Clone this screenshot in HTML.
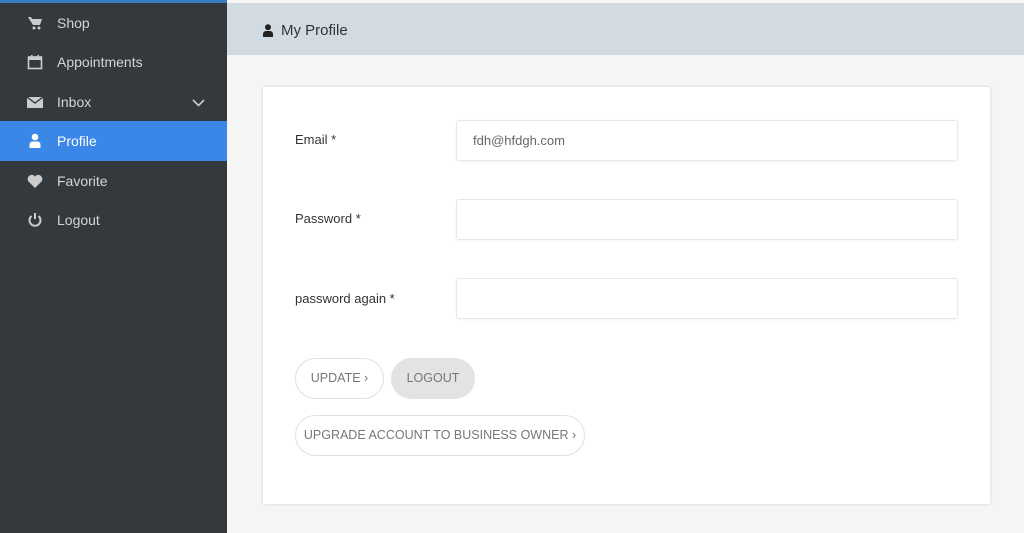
<!DOCTYPE html><html><head><style>
body{margin:0;width:1024px;height:533px;overflow:hidden;font-family:"Liberation Sans",sans-serif;background:#f5f5f5;position:relative}
.sb{position:absolute;left:0;top:0;width:227px;height:533px;background:#33393c}
.sb .top{height:3px;background:#3a7cc0}
.it{position:absolute;left:0;width:227px;height:40px;color:#d4d4d4;font-size:14px;line-height:40px}
.it span{position:absolute;left:57px}
.it svg{position:absolute;left:27px;top:12px}
.act{background:#3a87e8;color:#fff}
.hd{position:absolute;left:227px;top:3px;right:0;height:52px;background:#d3dbe2;color:#333;font-size:15px;line-height:55px}
.card{position:absolute;left:263px;top:87px;width:727px;height:417px;background:#fff;box-shadow:0 0 3px rgba(0,0,0,.15)}
.lb{position:absolute;left:32px;font-size:13px;color:#333}
.in{position:absolute;left:193px;width:500px;height:39px;border:1px solid #e8e8e8;border-radius:3px;box-shadow:0 1px 2px rgba(0,0,0,.05);font-size:13px;color:#666;line-height:39px;text-indent:16px}
.bt{position:absolute;height:41px;border:1px solid #e0e0e0;border-radius:21px;font-size:12.5px;color:#777;line-height:39px;text-align:center;box-sizing:border-box}
</style></head><body>
<div class="sb"><div class="top"></div>
<div class="it" style="top:3px"><svg width="16" height="16" viewBox="0 0 16 16"><path d="M1 2h3l1 2h10l-2 6H6z" fill="#ccc"/><circle cx="7" cy="13" r="1.5" fill="#ccc"/><circle cx="12" cy="13" r="1.5" fill="#ccc"/></svg><span>Shop</span></div>
<div class="it" style="top:42px"><svg width="16" height="16" viewBox="0 0 16 16"><rect x="1.5" y="3" width="13" height="11.5" fill="none" stroke="#ccc" stroke-width="1.6"/><rect x="1.5" y="3" width="13" height="3" fill="#ccc"/><rect x="4" y="1" width="1.6" height="3" fill="#ccc"/><rect x="10.4" y="1" width="1.6" height="3" fill="#ccc"/></svg><span>Appointments</span></div>
<div class="it" style="top:82px"><svg width="16" height="16" viewBox="0 0 16 16"><rect x="0" y="3" width="16" height="11" fill="#ccc"/><path d="M0 3l8 6 8-6" fill="none" stroke="#33393c" stroke-width="1.3"/></svg><span>Inbox</span><svg style="left:192px;top:17px" width="13" height="8" viewBox="0 0 13 8"><path d="M1 1l5.5 5.5L12 1" fill="none" stroke="#ccc" stroke-width="1.6"/></svg></div>
<div class="it act" style="top:121px"><svg width="16" height="16" viewBox="0 0 16 16"><circle cx="8" cy="4" r="3.3" fill="#fff"/><path d="M2.5 15v-3.5a3 3 0 0 1 3-3h5a3 3 0 0 1 3 3V15z" fill="#fff"/></svg><span>Profile</span></div>
<div class="it" style="top:161px"><svg width="16" height="16" viewBox="0 0 16 16"><path d="M8 15L1.5 8.5A3.8 3.8 0 0 1 8 3.5a3.8 3.8 0 0 1 6.5 5z" fill="#ccc"/></svg><span>Favorite</span></div>
<div class="it" style="top:200px"><svg width="16" height="16" viewBox="0 0 16 16"><path d="M4.5 4a5.5 5.5 0 1 0 7 0" fill="none" stroke="#ccc" stroke-width="2"/><path d="M8 1v6" stroke="#ccc" stroke-width="2"/></svg><span>Logout</span></div>
</div>
<div class="hd"><svg style="position:absolute;left:35px;top:21px" width="12" height="13" viewBox="0 0 12 13"><circle cx="6" cy="3.3" r="3" fill="#222"/><path d="M1 13v-3a3 3 0 0 1 3-3h4a3 3 0 0 1 3 3v3z" fill="#222"/></svg><span style="position:absolute;left:54px">My Profile</span></div>
<div class="card">
<div class="lb" style="top:45px">Email *</div><div class="in" style="top:33px">fdh@hfdgh.com</div>
<div class="lb" style="top:124px">Password *</div><div class="in" style="top:112px"></div>
<div class="lb" style="top:204px">password again *</div><div class="in" style="top:191px"></div>
<div class="bt" style="left:32px;top:271px;width:89px">UPDATE ›</div>
<div class="bt" style="left:128px;top:271px;width:84px;background:#e3e3e3;border-color:#e3e3e3">LOGOUT</div>
<div class="bt" style="left:32px;top:328px;width:290px">UPGRADE ACCOUNT TO BUSINESS OWNER ›</div>
</div>
</body></html>
